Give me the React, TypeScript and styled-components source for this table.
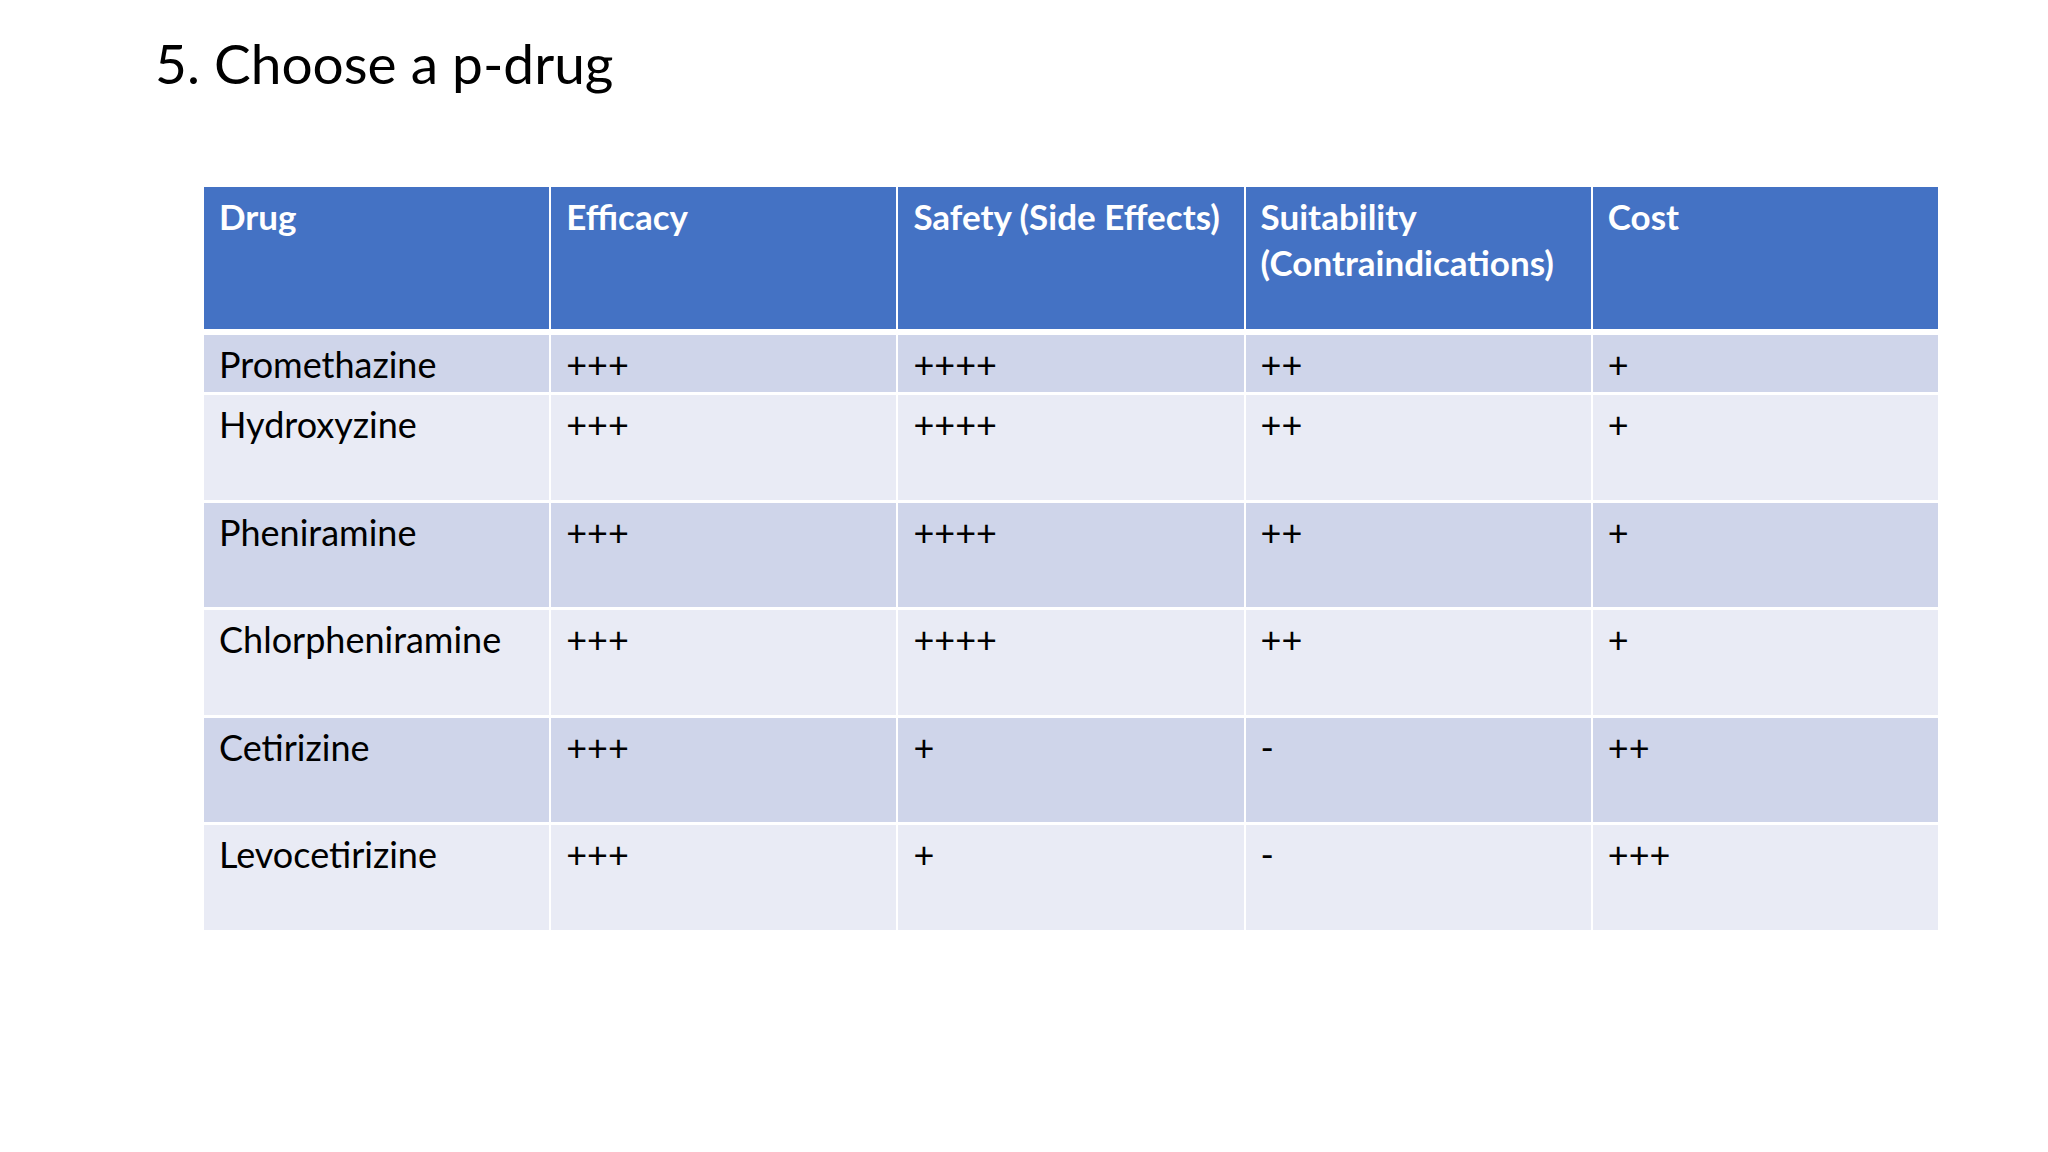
import React from "react";
import styled, { createGlobalStyle } from "styled-components";

const GlobalStyle = createGlobalStyle`
  html, body {
    margin: 0;
    padding: 0;
    background: #ffffff;
  }
  body {
    font-family: Lato, "Open Sans", "Liberation Sans", sans-serif;
  }
`;

const Slide = styled.div`
  width: 2048px;
  height: 1152px;
  background: #ffffff;
  display: flex;
  flex-direction: column;
  box-sizing: border-box;
  padding-top: 30px;
  overflow: hidden;
`;

const Title = styled.h1`
  margin: 0 0 0 155px;
  font-family: Lato, "Open Sans", sans-serif;
  font-weight: 400;
  font-size: 55px;
  line-height: 66px;
  color: #000000;
`;

const Table = styled.div`
  margin: 91px 0 0 204px;
  width: 1734px;
  display: grid;
  grid-template-columns: repeat(5, 1fr);
  grid-template-rows: 145px 57px repeat(5, 104.6px);
  column-gap: 2px;
  row-gap: 3px;
  background: #ffffff;
`;

const HeadCell = styled.div`
  background: #4472c4;
  color: #ffffff;
  font-family: Lato, "Open Sans", sans-serif;
  font-weight: 700;
  font-size: 35px;
  line-height: 46px;
  padding: 6px 15px 0 15px;
  margin-bottom: 3px;
  box-sizing: border-box;
`;

const Cell = styled.div<{ $alt: boolean }>`
  background: ${(p) => (p.$alt ? "#e9ebf5" : "#cfd5ea")};
  color: #000000;
  font-family: Lato, "Open Sans", sans-serif;
  font-weight: 400;
  font-size: 36px;
  line-height: 42px;
  padding: 8px 15px 0 15px;
  box-sizing: border-box;
  white-space: nowrap;
`;

const headers = [
  "Drug",
  "Efficacy",
  "Safety (Side Effects)",
  "Suitability (Contraindications)",
  "Cost",
];

const rows: string[][] = [
  ["Promethazine", "+++", "++++", "++", "+"],
  ["Hydroxyzine", "+++", "++++", "++", "+"],
  ["Pheniramine", "+++", "++++", "++", "+"],
  ["Chlorpheniramine", "+++", "++++", "++", "+"],
  ["Cetirizine", "+++", "+", "-", "++"],
  ["Levocetirizine", "+++", "+", "-", "+++"],
];

export default function App() {
  return (
    <>
      <GlobalStyle />
      <Slide>
        <Title>5. Choose a p-drug</Title>
        <Table>
          {headers.map((h) => (
            <HeadCell key={h}>{h}</HeadCell>
          ))}
          {rows.map((r, i) =>
            r.map((c, j) => (
              <Cell key={`${i}-${j}`} $alt={i % 2 === 1}>
                {c}
              </Cell>
            ))
          )}
        </Table>
      </Slide>
    </>
  );
}
